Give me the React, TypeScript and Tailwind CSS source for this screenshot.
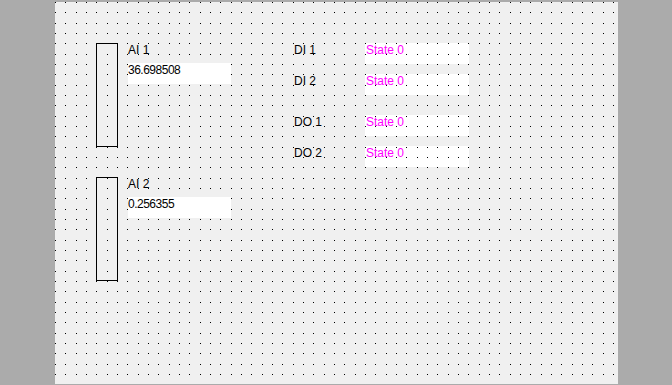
import React from 'react';

const PANEL_W = 563;
const PANEL_H = 382;
const STEP = 31 / 3;

// designer grid: one 1px dot every ~10.33px
function gridPath() {
  let d = '';
  for (let j = 0; Math.round(j * STEP) < PANEL_H; j++) {
    const y = Math.round(j * STEP);
    for (let i = 0; Math.round(i * STEP) < PANEL_W; i++) {
      const x = Math.round(i * STEP);
      d += `M${x} ${y}h1v1h-1z`;
    }
  }
  return d;
}

const font = { fontFamily: '"Liberation Sans", Arial, sans-serif' };

function AnalogGroup({ name, value }: { name: string; value: string }) {
  return (
    <div className="flex">
      <div className="w-[22px] h-[104px] border border-black" />
      <div className="ml-[10px] flex flex-col">
        <div className="h-[20px] text-[12px] leading-[14px] text-black">{name}</div>
        {/* value boxes sit above the grid */}
        <div className="relative z-10 w-[103px] h-[21px] bg-white text-[12px] leading-[14px] tracking-[-0.5px] text-black">
          {value}
        </div>
      </div>
    </div>
  );
}

function StateRow({ name, className = '' }: { name: string; className?: string }) {
  return (
    <div className={`flex h-[21px] ${className}`}>
      <div className="w-[71px] text-[12px] leading-[14px] text-black">{name}</div>
      <div className="w-[104px] h-[21px] bg-white pl-[1px] text-[12px] leading-[14px] text-[#ff00ff]">
        State 0
      </div>
    </div>
  );
}

export default function App() {
  const d = gridPath();
  return (
    <div className="w-[672px] h-[385px] bg-[#ababab] pt-[2px] pl-[55px] overflow-hidden" style={font}>
      <div className="relative w-[563px] h-[382px] bg-[#f0f0f0] pt-[41px] pl-[41px] flex items-start">
        <div className="flex flex-col gap-[30px]">
          <AnalogGroup name="AI 1" value="36.698508" />
          <AnalogGroup name="AI 2" value="0.256355" />
        </div>

        <div className="ml-[63px] flex flex-col">
          <StateRow name="DI 1" />
          <StateRow name="DI 2" className="mt-[10px]" />
          <StateRow name="DO 1" className="mt-[20px]" />
          <StateRow name="DO 2" className="mt-[10px]" />
        </div>

        <svg
          className="absolute inset-0 pointer-events-none"
          width={PANEL_W}
          height={PANEL_H}
          shapeRendering="crispEdges"
        >
          <path d={d} fill="#000" />
        </svg>
      </div>
    </div>
  );
}
